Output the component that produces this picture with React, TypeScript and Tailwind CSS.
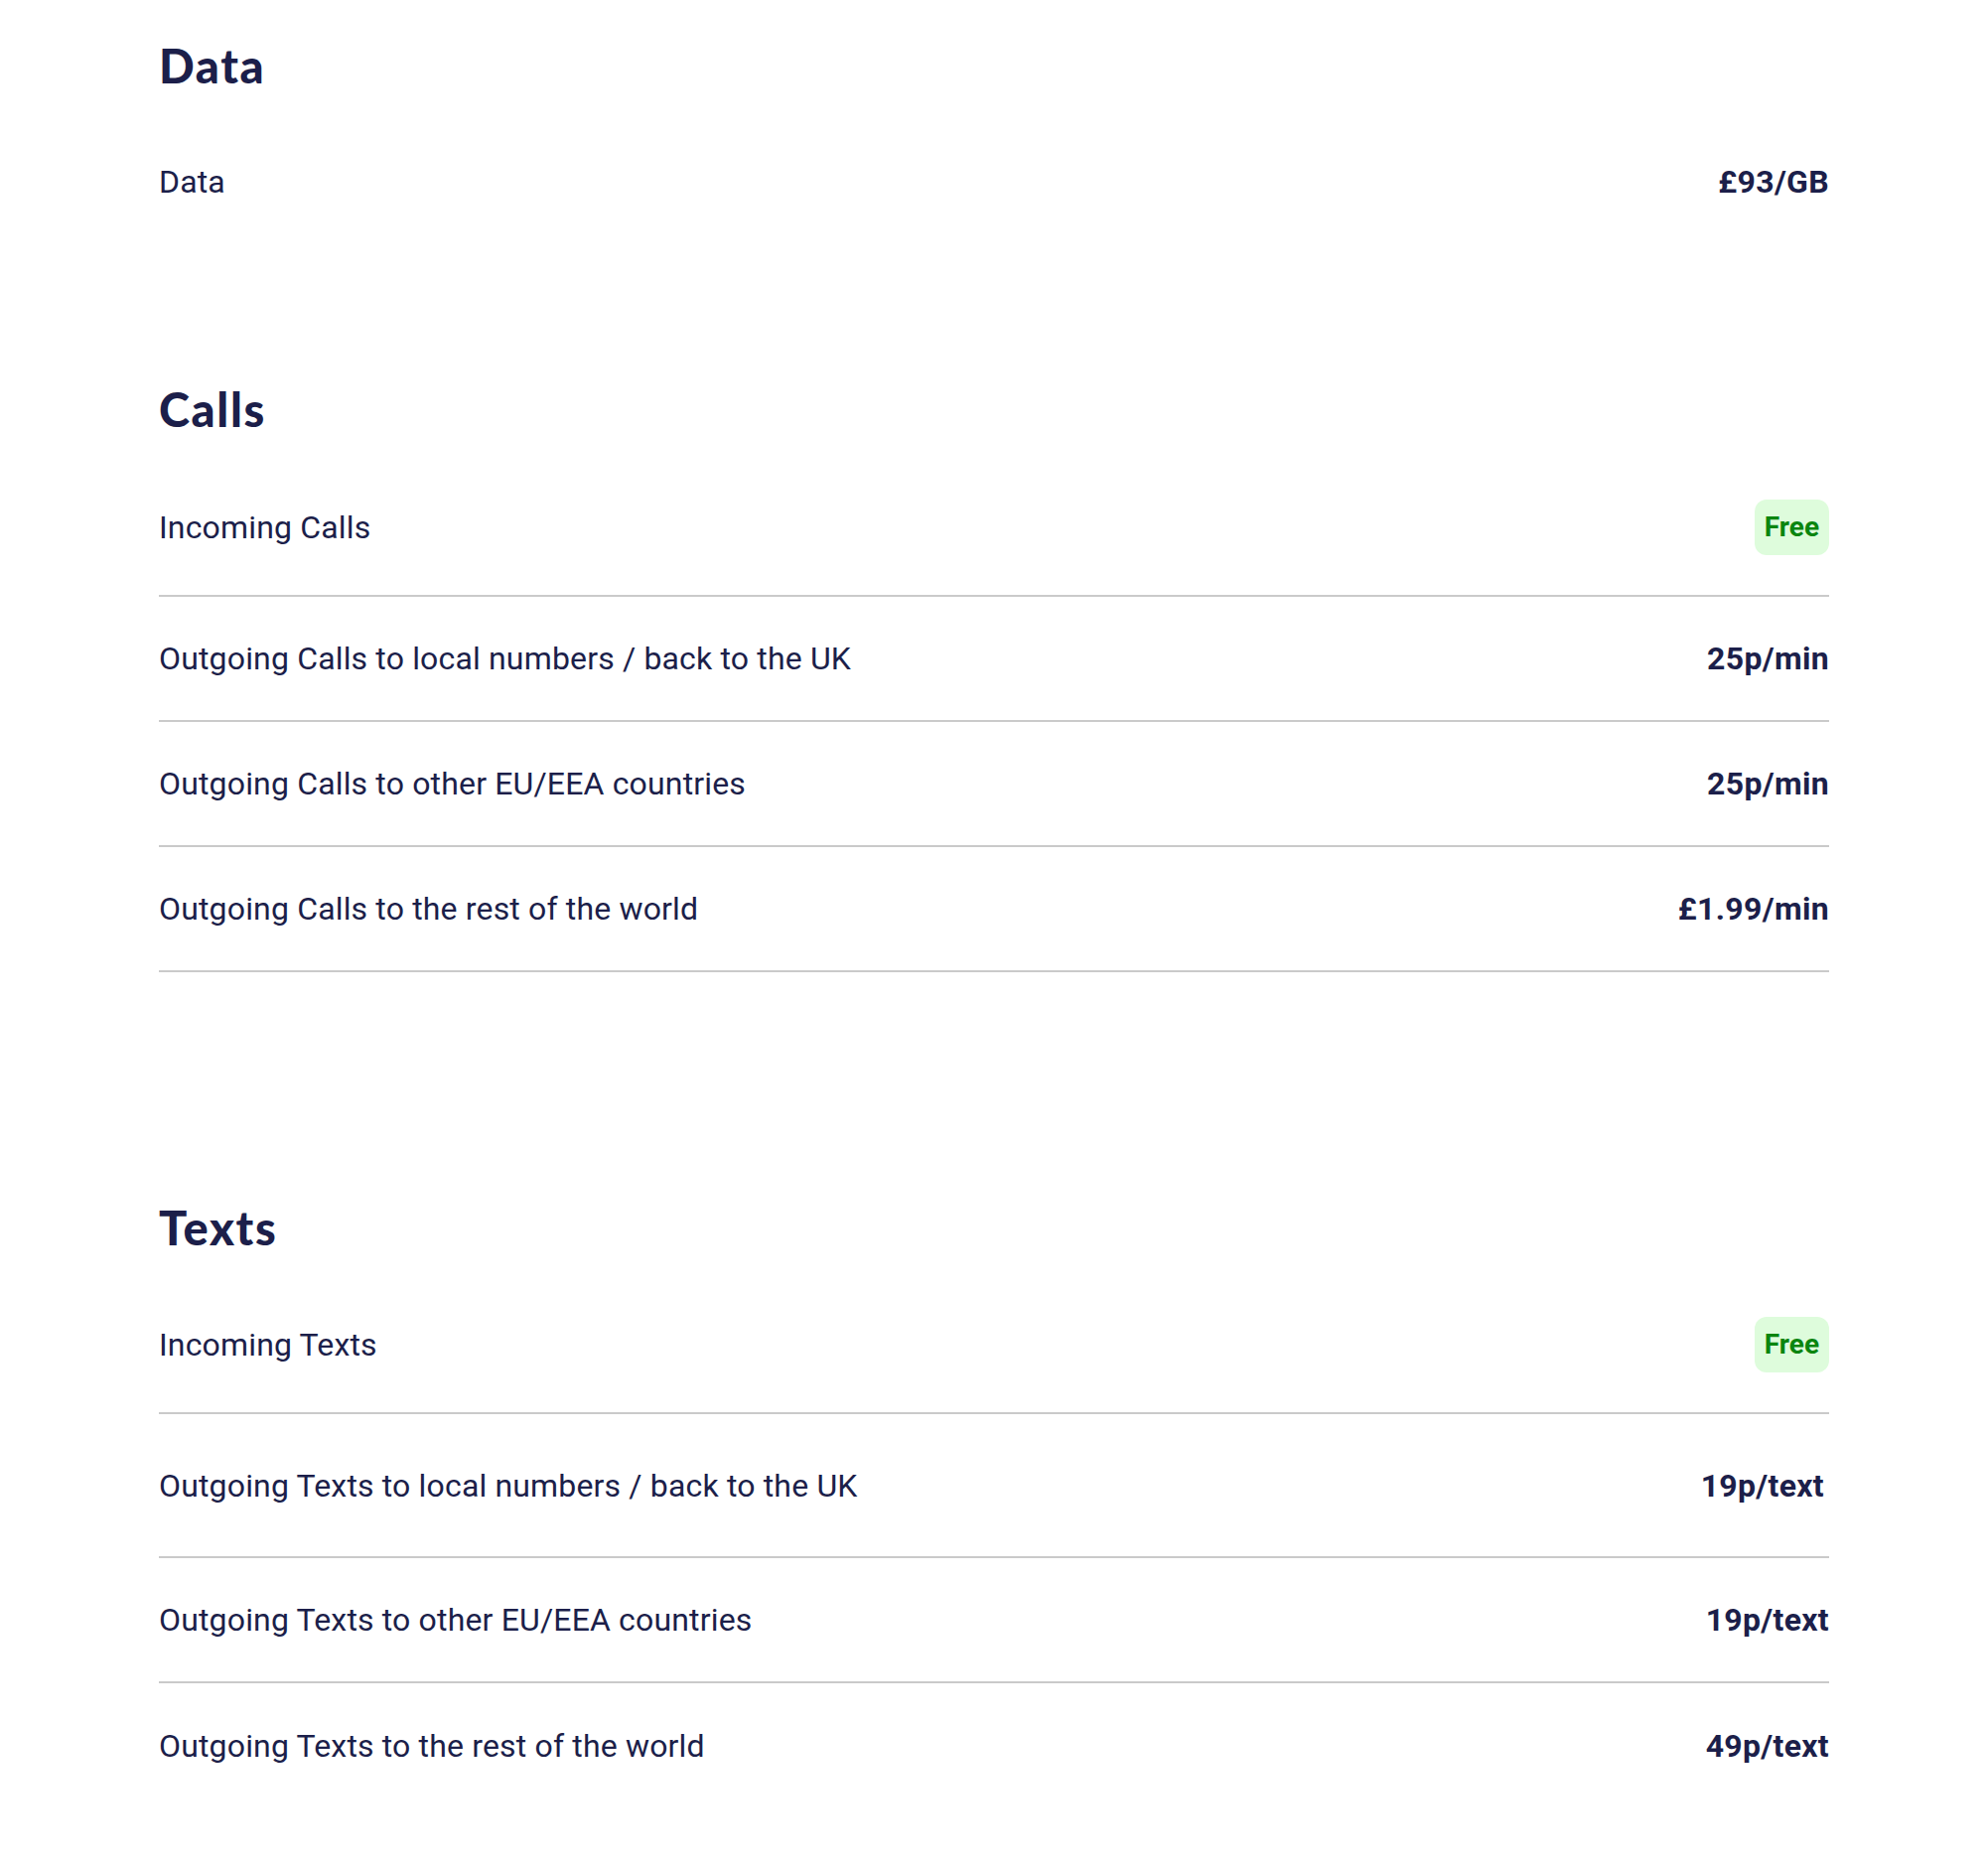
const rowText = "font-['Roboto',sans-serif] text-[32px] leading-[44px] tracking-[0.005em] text-[#1c1f4a]";
const priceText = "font-['Roboto',sans-serif] text-[32px] font-bold leading-[44px] tracking-[0.01em] text-[#1c1f4a]";

type Rate = { label: string; price?: string; free?: boolean; tall?: boolean; nudge?: boolean; last?: boolean };

const calls: Rate[] = [
  { label: "Incoming Calls", free: true },
  { label: "Outgoing Calls to local numbers / back to the UK", price: "25p/min" },
  { label: "Outgoing Calls to other EU/EEA countries", price: "25p/min" },
  { label: "Outgoing Calls to the rest of the world", price: "£1.99/min" },
];

const texts: Rate[] = [
  { label: "Incoming Texts", free: true },
  { label: "Outgoing Texts to local numbers / back to the UK", price: "19p/text", tall: true, nudge: true },
  { label: "Outgoing Texts to other EU/EEA countries", price: "19p/text" },
  { label: "Outgoing Texts to the rest of the world", price: "49p/text", last: true },
];

function Heading({ children }: { children: string }) {
  return (
    <h2 className="h-[56px] font-['Lato',sans-serif] text-[47px] font-black leading-[56px] tracking-[0.035em] text-[#1c1f4a]">
      {children}
    </h2>
  );
}

function FreeBadge() {
  return (
    <span className="inline-flex h-[56px] items-center rounded-[12px] bg-[#defcdc] px-[10px] font-['Roboto',sans-serif] text-[28px] font-bold text-[#0a850f]">
      Free
    </span>
  );
}

function RateRow({ rate }: { rate: Rate }) {
  const height = rate.free ? "h-[138px]" : rate.tall ? "h-[145px]" : "h-[126px]";
  return (
    <div
      className={`flex items-center justify-between ${height} ${
        rate.last ? "" : "border-b-2 border-[#cacaca]"
      }`}
    >
      <span className={rowText}>{rate.label}</span>
      {rate.free ? (
        <FreeBadge />
      ) : (
        <span className={`${priceText} ${rate.nudge ? "mr-[5px]" : ""}`}>{rate.price}</span>
      )}
    </div>
  );
}

export default function App() {
  return (
    <div className="min-h-screen bg-white">
      <div className="mx-auto w-[1682px] pt-[38px]">
        <section>
          <Heading>Data</Heading>
          <div className="mt-[27px] flex h-[124px] items-center justify-between">
            <span className={rowText}>Data</span>
            <span className={priceText}>£93/GB</span>
          </div>
        </section>

        <section className="mt-[139px]">
          <Heading>Calls</Heading>
          <div className="mt-[23px]">
            {calls.map((r) => (
              <RateRow key={r.label} rate={r} />
            ))}
          </div>
        </section>

        <section className="mt-[229px]">
          <Heading>Texts</Heading>
          <div className="mt-[22px]">
            {texts.map((r) => (
              <RateRow key={r.label} rate={r} />
            ))}
          </div>
        </section>
      </div>
    </div>
  );
}
